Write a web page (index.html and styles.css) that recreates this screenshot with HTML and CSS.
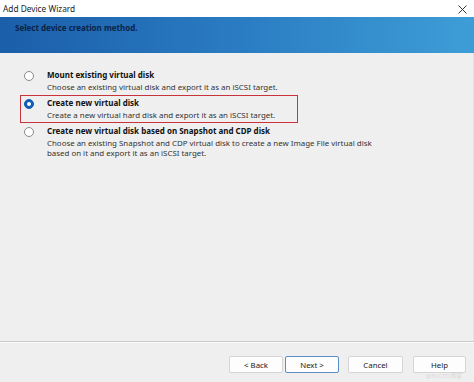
FILE: index.html
```html
<!DOCTYPE html>
<html lang="en">
<head>
    <meta charset="UTF-8">
    <title>Add Device Wizard</title>
    <link rel="stylesheet" href="styles.css">
</head>
<body>
    <div class="window">
        <div class="titlebar">
            <span class="title">Add Device Wizard</span>
            <svg class="close" width="9" height="9" viewBox="0 0 9 9">
                <path d="M0.5 0.5 L8.5 8.5 M8.5 0.5 L0.5 8.5" stroke="#333" stroke-width="1"/>
            </svg>
        </div>

        <div class="banner">Select device creation method.</div>

        <div class="main">
            <div class="option">
                <span class="radio"></span>
                <div class="text">
                    <div class="opt-title">Mount existing virtual disk</div>
                    <div class="opt-desc">Choose an existing virtual disk and export it as an iSCSI target.</div>
                </div>
            </div>
            <div class="option selected">
                <span class="radio checked"></span>
                <div class="text">
                    <div class="opt-title">Create new virtual disk</div>
                    <div class="opt-desc">Create a new virtual hard disk and export it as an iSCSI target.</div>
                </div>
            </div>
            <div class="option">
                <span class="radio"></span>
                <div class="text">
                    <div class="opt-title">Create new virtual disk based on Snapshot and CDP disk</div>
                    <div class="opt-desc">Choose an existing Snapshot and CDP virtual disk to create a new Image File virtual disk<br>based on it and export it as an iSCSI target.</div>
                </div>
            </div>
        </div>

        <div class="footer">
            <button class="btn">&lt; Back</button>
            <button class="btn default">Next &gt;</button>
            <button class="btn cancel">Cancel</button>
            <button class="btn help">Help</button>
            <span class="watermark">@51CTO博客</span>
        </div>
    </div>
</body>
</html>
```

FILE: styles.css
```css
html, body {
    margin: 0;
    padding: 0;
}

body {
    font-family: 'Noto Sans', 'Noto Sans CJK SC', sans-serif;
    color: #1e1e1e;
    background-color: #efefef;
}

.window {
    width: 474px;
    height: 382px;
    display: flex;
    flex-direction: column;
    position: relative;
    overflow: hidden;
}

.titlebar {
    height: 17px;
    background-color: #fff;
    display: flex;
    align-items: center;
    justify-content: space-between;
    padding: 0 7px 0 3px;
    box-sizing: border-box;
}

.title {
    font-size: 8.3px;
    color: #222;
}

.close {
    margin-top: 1px;
}

.banner {
    height: 36px;
    box-sizing: border-box;
    padding: 5px 0 0 15px;
    font-size: 8px;
    line-height: 12px;
    font-weight: bold;
    color: #0b2248;
    background: linear-gradient(to right, #1b5ea9 0%, #2a7cc2 50%, #3e9dd6 100%);
}

.main {
    flex: 1;
    padding: 14px 0 0 20px;
    border-right: 1px solid #e2e2e2;
    border-bottom: 1px solid #c9c9c9;
}

.option {
    display: flex;
    align-items: flex-start;
    border: 1px solid transparent;
    padding: 1px 4px 2px 3px;
    width: max-content;
}

.option.selected {
    border-color: #c9343c;
    width: 278px;
    box-sizing: border-box;
}

.radio {
    width: 8px;
    height: 8px;
    margin-top: 2px;
    border: 1px solid #8a8a8a;
    border-radius: 50%;
    background-color: #fff;
    flex-shrink: 0;
    margin-right: 13px;
    position: relative;
}

.radio.checked {
    border-color: #0d5fb3;
    background-color: #0d5fb3;
}

.radio.checked::after {
    content: '';
    position: absolute;
    left: 2px;
    top: 2px;
    width: 4px;
    height: 4px;
    border-radius: 50%;
    background-color: #fff;
}

.opt-title {
    font-size: 8px;
    line-height: 12px;
    font-weight: bold;
    color: #111;
}

.opt-desc {
    margin-top: 1px;
    font-size: 7.9px;
    line-height: 10px;
    color: #333;
}

.footer {
    height: 40px;
    box-sizing: border-box;
    padding: 13px 8px 0 0;
    display: flex;
    justify-content: flex-end;
    align-items: flex-start;
    border-top: 1px solid #fafafa;
}

.btn {
    width: 54px;
    height: 17px;
    padding: 0;
    font-family: 'Noto Sans', sans-serif;
    font-size: 7.8px;
    color: #222;
    background-color: #fdfdfd;
    border: 1px solid #d4d4d4;
    border-radius: 2px;
    margin-left: 2px;
}

.btn.default {
    border-color: #5a8fc6;
}

.btn.cancel {
    margin-left: 9px;
    width: 55px;
}

.btn.help {
    margin-left: 10px;
    width: 53px;
}

.watermark {
    position: absolute;
    right: 12px;
    bottom: 2px;
    font-size: 6px;
    color: #d9d9d9;
}
```
